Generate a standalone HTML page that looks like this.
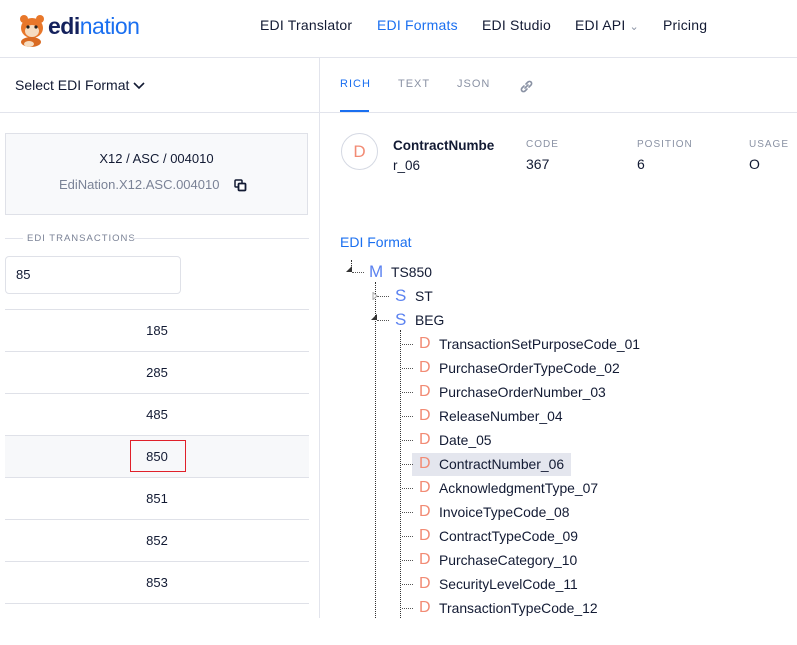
<!DOCTYPE html>
<html><head><meta charset="utf-8"><style>
*{box-sizing:border-box;margin:0;padding:0}
body{width:797px;height:618px;overflow:hidden;background:#fff;font-family:"Liberation Sans",sans-serif;color:#121a33;position:relative;font-size:14px}
.a{position:absolute;white-space:nowrap}
.nav{font-size:14px;top:17px;letter-spacing:0.2px}
.hl{position:absolute;background:#e2e4ec}
.row{position:absolute;left:5px;width:304px;height:42px;border-top:1px solid #dfe1e8;text-align:center;line-height:41px;font-size:13px}
.tab{font-size:11px;letter-spacing:1px;color:#8a92a4;top:78px}
.lbl{font-size:10px;letter-spacing:1px;color:#8a92a4;top:139px}
.val{font-size:14px;top:156px}
.t{position:absolute;font-size:13.9px;white-space:nowrap}
.D{color:#f28b74;font-size:16px}
.S,.M{color:#5b82f0;font-size:17px}
.dv{position:absolute;border-left:1px dotted #333;width:0}
.dh{position:absolute;border-top:1px dotted #555;height:0}
</style></head><body>
<svg class="a" style="left:17px;top:14px" width="30" height="34" viewBox="0 0 30 34"><ellipse cx="15" cy="14" rx="11" ry="10" fill="#e8772a"/><circle cx="7" cy="5" r="4" fill="#e8772a"/><circle cx="23" cy="5" r="4" fill="#e8772a"/><ellipse cx="15" cy="17" rx="7" ry="6" fill="#f6dcc0"/><circle cx="11" cy="13" r="1.6" fill="#222"/><circle cx="19" cy="13" r="1.6" fill="#222"/><ellipse cx="14" cy="28" rx="10" ry="5" fill="#d96a22"/><ellipse cx="12" cy="30" rx="5" ry="3" fill="#f6dcc0"/></svg>
<div class="a" style="left:48px;top:13px;font-size:23px;font-weight:bold;color:#14215c;letter-spacing:-0.5px">edi<span style="color:#1a6ff0;font-weight:normal">nation</span></div>
<div class="a nav" style="left:260px">EDI Translator</div>
<div class="a nav" style="left:377px;color:#1a6ff0">EDI Formats</div>
<div class="a nav" style="left:482px">EDI Studio</div>
<div class="a nav" style="left:575px">EDI API <span style="color:#8a92a4;font-size:11px">&#8964;</span></div>
<div class="a nav" style="left:663px">Pricing</div>
<div class="hl" style="left:0;top:57px;width:797px;height:1px"></div>
<div class="hl" style="left:319px;top:57px;width:1px;height:561px"></div>
<div class="a" style="left:15px;top:77px;font-size:14px">Select EDI Format <svg width="12" height="8" viewBox="0 0 12 8"><path d="M1 1l5 5 5-5" stroke="#121a33" stroke-width="1.6" fill="none"/></svg></div>
<div class="hl" style="left:0;top:112px;width:797px;height:1px"></div>
<div class="a" style="left:5px;top:133px;width:303px;height:82px;background:#f8f9fb;border:1px solid #dfe1e8"></div>
<div class="a" style="left:5px;top:151px;width:303px;text-align:center;font-size:13px">X12 / ASC / 004010</div>
<div class="a" style="left:59px;top:177px;font-size:13px;color:#7a8296">EdiNation.X12.ASC.004010</div>
<svg class="a" style="left:234px;top:179px" width="13" height="13" viewBox="0 0 13 13"><rect x="1" y="1" width="7" height="7" rx="1" fill="none" stroke="#121a33" stroke-width="1.5"/><rect x="4.5" y="4.5" width="7" height="7" rx="1" fill="#fff" stroke="#121a33" stroke-width="1.8"/></svg>
<div class="hl" style="left:5px;top:238px;width:18px;height:1px"></div>
<div class="a" style="left:27px;top:233px;font-size:9.5px;letter-spacing:1px;color:#7a8296">EDI TRANSACTIONS</div>
<div class="hl" style="left:133px;top:238px;width:176px;height:1px"></div>
<div class="a" style="left:5px;top:256px;width:176px;height:38px;border:1px solid #dfe1e8;border-radius:4px;padding:10px 10px;font-size:13px">85</div>
<div class="row" style="top:309px">185</div>
<div class="row" style="top:351px">285</div>
<div class="row" style="top:393px">485</div>
<div class="row" style="top:435px;background:#f7f8fa">850</div>
<div class="a" style="left:130px;top:440px;width:56px;height:32px;border:1px solid #e0202a"></div>
<div class="row" style="top:477px">851</div>
<div class="row" style="top:519px">852</div>
<div class="row" style="top:561px">853</div>
<div class="row" style="top:603px"></div>
<div class="a tab" style="left:340px;color:#1a6ff0">RICH</div>
<div class="a tab" style="left:398px">TEXT</div>
<div class="a tab" style="left:457px">JSON</div>
<svg class="a" style="left:519px;top:79px" width="15" height="15" viewBox="0 0 15 15"><path d="M6 9l3-3M5 7L3 9a2.1 2.1 0 003 3l2-2M10 8l2-2a2.1 2.1 0 00-3-3L7 5" stroke="#8a92a4" stroke-width="1.6" fill="none" stroke-linecap="round"/></svg>
<div class="a" style="left:340px;top:110px;width:29px;height:2px;background:#1a6ff0"></div>
<div class="a" style="left:341px;top:133px;width:37px;height:37px;border-radius:50%;border:1px solid #d5d9e3;text-align:center;line-height:35px;color:#f28b74;font-size:17px">D</div>
<div class="a" style="left:393px;top:136px;font-size:13.5px;font-weight:bold;line-height:20px">ContractNumbe<br><span style="font-weight:normal">r_06</span></div>
<div class="a lbl" style="left:526px">CODE</div><div class="a val" style="left:526px">367</div>
<div class="a lbl" style="left:637px">POSITION</div><div class="a val" style="left:637px">6</div>
<div class="a lbl" style="left:749px">USAGE</div><div class="a val" style="left:749px">O</div>
<div class="a" style="left:340px;top:234px;font-size:14px;color:#1a6ff0">EDI Format</div>
<div class="dv" style="left:351px;top:260px;height:12px"></div>
<div class="dh" style="left:352px;top:272px;width:12px"></div>
<svg class="a" style="left:346px;top:266px" width="6" height="6"><path d="M6 0V6H0z" fill="#333"/></svg>
<div class="dv" style="left:375px;top:282px;height:336px"></div>
<div class="dh" style="left:377px;top:296px;width:12px"></div>
<svg class="a" style="left:372px;top:292px" width="6" height="8"><path d="M1 0.5L5 4 1 7.5z" fill="#fff" stroke="#aaa"/></svg>
<div class="dh" style="left:377px;top:320px;width:12px"></div>
<svg class="a" style="left:371px;top:314px" width="6" height="6"><path d="M6 0V6H0z" fill="#333"/></svg>
<div class="dv" style="left:400px;top:330px;height:288px"></div>
<div class="t M" style="left:369px;top:262px">M</div><div class="t" style="left:391px;top:264px">TS850</div>
<div class="t S" style="left:395px;top:286px">S</div><div class="t" style="left:415px;top:288px">ST</div>
<div class="t S" style="left:395px;top:310px">S</div><div class="t" style="left:415px;top:312px">BEG</div>
<div class="a" style="left:412px;top:453px;width:159px;height:23px;background:#e4e6ee"></div>
<div class="dh" style="left:402px;top:344px;width:11px"></div><div class="t D" style="left:419px;top:335px">D</div><div class="t" style="left:439px;top:336px">TransactionSetPurposeCode_01</div>
<div class="dh" style="left:402px;top:368px;width:11px"></div><div class="t D" style="left:419px;top:359px">D</div><div class="t" style="left:439px;top:360px">PurchaseOrderTypeCode_02</div>
<div class="dh" style="left:402px;top:392px;width:11px"></div><div class="t D" style="left:419px;top:383px">D</div><div class="t" style="left:439px;top:384px">PurchaseOrderNumber_03</div>
<div class="dh" style="left:402px;top:416px;width:11px"></div><div class="t D" style="left:419px;top:407px">D</div><div class="t" style="left:439px;top:408px">ReleaseNumber_04</div>
<div class="dh" style="left:402px;top:440px;width:11px"></div><div class="t D" style="left:419px;top:431px">D</div><div class="t" style="left:439px;top:432px">Date_05</div>
<div class="dh" style="left:402px;top:464px;width:11px"></div><div class="t D" style="left:419px;top:455px">D</div><div class="t" style="left:439px;top:456px">ContractNumber_06</div>
<div class="dh" style="left:402px;top:488px;width:11px"></div><div class="t D" style="left:419px;top:479px">D</div><div class="t" style="left:439px;top:480px">AcknowledgmentType_07</div>
<div class="dh" style="left:402px;top:512px;width:11px"></div><div class="t D" style="left:419px;top:503px">D</div><div class="t" style="left:439px;top:504px">InvoiceTypeCode_08</div>
<div class="dh" style="left:402px;top:536px;width:11px"></div><div class="t D" style="left:419px;top:527px">D</div><div class="t" style="left:439px;top:528px">ContractTypeCode_09</div>
<div class="dh" style="left:402px;top:560px;width:11px"></div><div class="t D" style="left:419px;top:551px">D</div><div class="t" style="left:439px;top:552px">PurchaseCategory_10</div>
<div class="dh" style="left:402px;top:584px;width:11px"></div><div class="t D" style="left:419px;top:575px">D</div><div class="t" style="left:439px;top:576px">SecurityLevelCode_11</div>
<div class="dh" style="left:402px;top:608px;width:11px"></div><div class="t D" style="left:419px;top:599px">D</div><div class="t" style="left:439px;top:600px">TransactionTypeCode_12</div>
</body></html>
